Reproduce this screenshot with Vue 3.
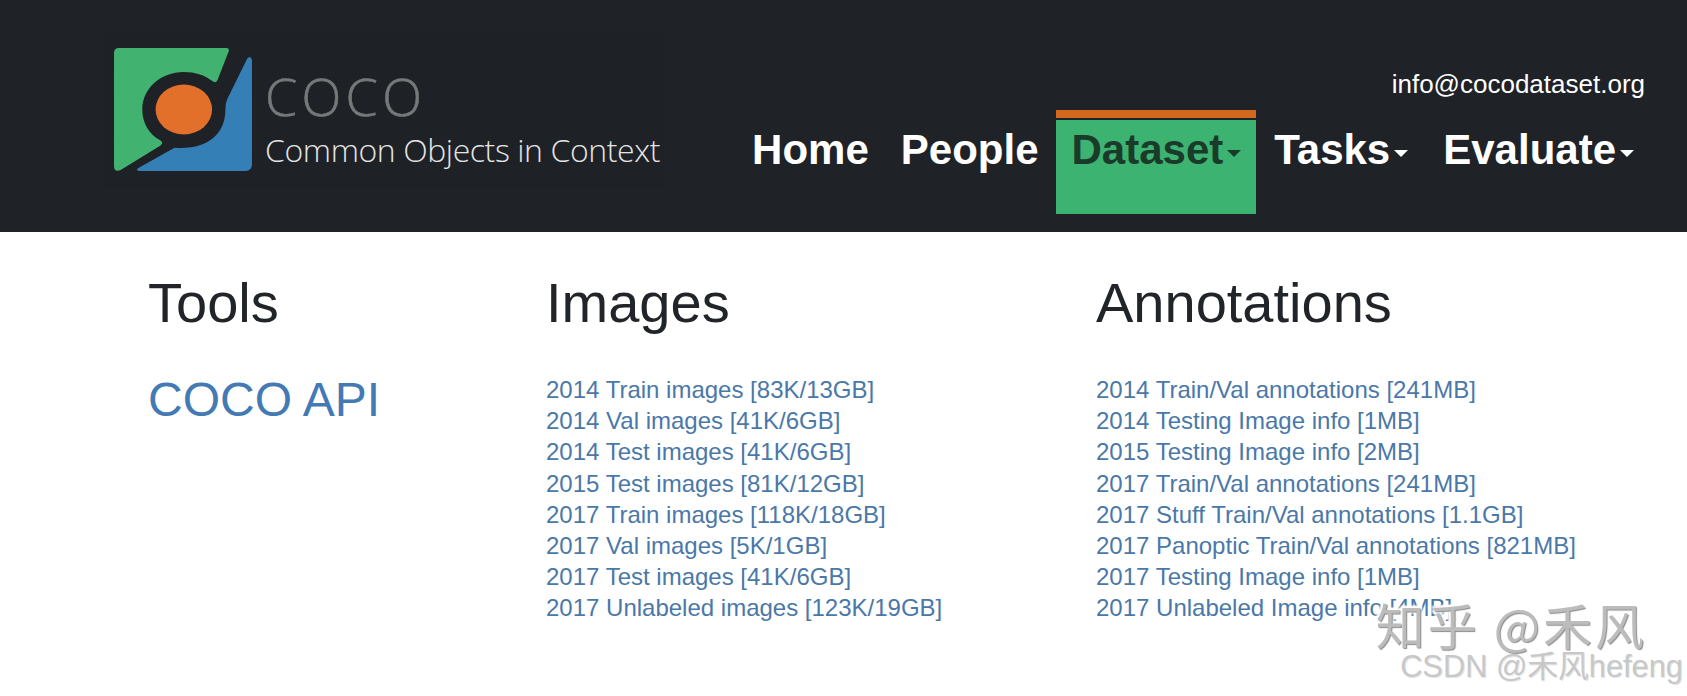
<template>
  <div class="page">
    <header class="topbar">
      <div class="logo">
        <svg class="mark" viewBox="40 55 415 370" width="138" height="123">
          <path d="M55 55H378Q388 55 385 65L352 150Q348 162 338 156C315 137 285 127 250 127C180 127 125 177 125 240C125 280 145 315 180 333Q190 340 180 348L60 422Q40 430 40 410V70Q40 55 55 55Z" fill="#42b271" />
          <path d="M440 88Q450 75 455 90V405Q455 425 435 425H118Q103 425 112 417L222 355C320 362 375 315 375 240Q375 222 380 210Z" fill="#347fb5" />
          <ellipse cx="250" cy="240" rx="85" ry="75" fill="#e2702a" />
        </svg>
        <div class="wordmark">
          <div class="word-coco">COCO</div>
          <div class="word-sub">Common Objects in Context</div>
        </div>
      </div>
      <div class="top-right">
        <div class="mail">info@cocodataset.org</div>
        <nav class="nav">
          <a class="nav-item home">Home</a>
          <a class="nav-item people">People</a>
          <a class="nav-item active">Dataset<span class="caret"></span></a>
          <a class="nav-item tasks">Tasks<span class="caret"></span></a>
          <a class="nav-item">Evaluate<span class="caret"></span></a>
        </nav>
      </div>
    </header>

    <main class="content">
      <section class="col col-tools">
        <h2>Tools</h2>
        <a class="api">COCO API</a>
      </section>
      <section class="col col-images">
        <h2>Images</h2>
        <ul>
          <li v-for="item in images" :key="item">{{ item }}</li>
        </ul>
      </section>
      <section class="col">
        <h2>Annotations</h2>
        <ul>
          <li v-for="item in annotations" :key="item">{{ item }}</li>
        </ul>
      </section>
    </main>

    <div class="watermark">
      <div class="wm-zhihu">知乎 @禾风</div>
      <div class="wm-csdn">CSDN @禾风hefeng</div>
    </div>
  </div>
</template>

<script setup>
const images = [
  '2014 Train images [83K/13GB]',
  '2014 Val images [41K/6GB]',
  '2014 Test images [41K/6GB]',
  '2015 Test images [81K/12GB]',
  '2017 Train images [118K/18GB]',
  '2017 Val images [5K/1GB]',
  '2017 Test images [41K/6GB]',
  '2017 Unlabeled images [123K/19GB]'
]
const annotations = [
  '2014 Train/Val annotations [241MB]',
  '2014 Testing Image info [1MB]',
  '2015 Testing Image info [2MB]',
  '2017 Train/Val annotations [241MB]',
  '2017 Stuff Train/Val annotations [1.1GB]',
  '2017 Panoptic Train/Val annotations [821MB]',
  '2017 Testing Image info [1MB]',
  '2017 Unlabeled Image info [4MB]'
]
</script>

<style>
html, body {
  margin: 0;
  background: #fff;
  overflow: hidden;
}
</style>

<style scoped>
.page {
  position: relative;
  width: 1687px;
  height: 696px;
  overflow: hidden;
  font-family: "Liberation Sans", Arial, sans-serif;
  color: #212529;
}

/* header */
.topbar {
  height: 232px;
  box-sizing: border-box;
  background: #1f2226;
  display: flex;
  justify-content: space-between;
  padding-left: 103px;
}
.logo {
  display: flex;
  align-items: flex-start;
  gap: 13px;
  box-sizing: border-box;
  width: 561px;
  height: 155px;
  margin-top: 32px;
  padding: 16px 0 0 11px;
  background: #1e2125;
}
.mark {
  display: block;
  flex: none;
}
.word-coco {
  margin-top: 19px;
  font-family: "Open Sans", sans-serif;
  font-weight: 300;
  font-size: 52px;
  line-height: 58px;
  letter-spacing: 4.3px;
  color: #77787a;
  -webkit-text-stroke: 0.6px #77787a;
}
.word-sub {
  margin-top: 5px;
  font-family: "Open Sans", sans-serif;
  font-weight: 300;
  font-size: 32px;
  line-height: 40px;
  letter-spacing: -0.42px;
  color: #e4e4e4;
  white-space: nowrap;
}
.top-right {
  display: flex;
  flex-direction: column;
  align-items: flex-end;
}
.mail {
  margin: 69px 42px 0 0;
  font-size: 26px;
  line-height: 30px;
  color: #fff;
}
.nav {
  display: flex;
  gap: 4px;
  margin-top: 21px;
  padding-right: 40px;
}
.nav-item {
  height: 94px;
  box-sizing: border-box;
  padding: 7px 16px 0;
  font-size: 42px;
  font-weight: 700;
  line-height: 46px;
  color: #fff;
  position: relative;
  white-space: nowrap;
}
.nav-item.home {
  padding-right: 12px;
}
.nav-item.people {
  padding-right: 13px;
}
.nav-item.tasks {
  padding: 7px 18px 0 14px;
}
.nav-item.active {
  padding-right: 18px;
  background: #3cb371;
  color: #1a3a2a;
}
.nav-item.active::before {
  content: "";
  position: absolute;
  left: 0;
  right: 0;
  top: -10px;
  height: 8px;
  background: #d2691e;
}
.caret {
  display: inline-block;
  margin: 0 -3px 0 4px;
  vertical-align: 7px;
  border-top: 7px solid currentColor;
  border-left: 7.5px solid transparent;
  border-right: 7.5px solid transparent;
}

/* body */
.content {
  display: flex;
  padding: 0 0 0 148px;
}
.col-tools {
  width: 398px;
}
.col-images {
  width: 550px;
}
h2 {
  margin: 38px 0 0;
  font-size: 56px;
  font-weight: 400;
  line-height: 66px;
}
.api {
  display: block;
  margin-top: 36px;
  font-size: 48px;
  line-height: 56px;
  color: #447ab3;
}
ul {
  list-style: none;
  margin: 38px 0 0;
  padding: 0;
}
li {
  font-size: 24px;
  line-height: 31.2px;
  color: #4a78a8;
  white-space: nowrap;
}

/* watermark over the corner */
.watermark {
  position: absolute;
  right: 4px;
  top: 596px;
  text-align: right;
}
.wm-zhihu {
  margin-right: 36px;
  font-family: "Noto Sans CJK SC", sans-serif;
  font-size: 49px;
  line-height: 56px;
  letter-spacing: 3px;
  color: #bcbcbc;
  text-shadow: 1px 1px 1px #8c8c8c, -2px -2px 2px #fff, 2px -2px 2px #fff, -2px 2px 2px #fff;
}
.wm-csdn {
  font-family: "Liberation Sans", "Noto Sans CJK SC", sans-serif;
  font-size: 30.8px;
  line-height: 30px;
  color: #c8c8c8;
  text-shadow: 1px 1px 0 #e4e4e4;
}
</style>
